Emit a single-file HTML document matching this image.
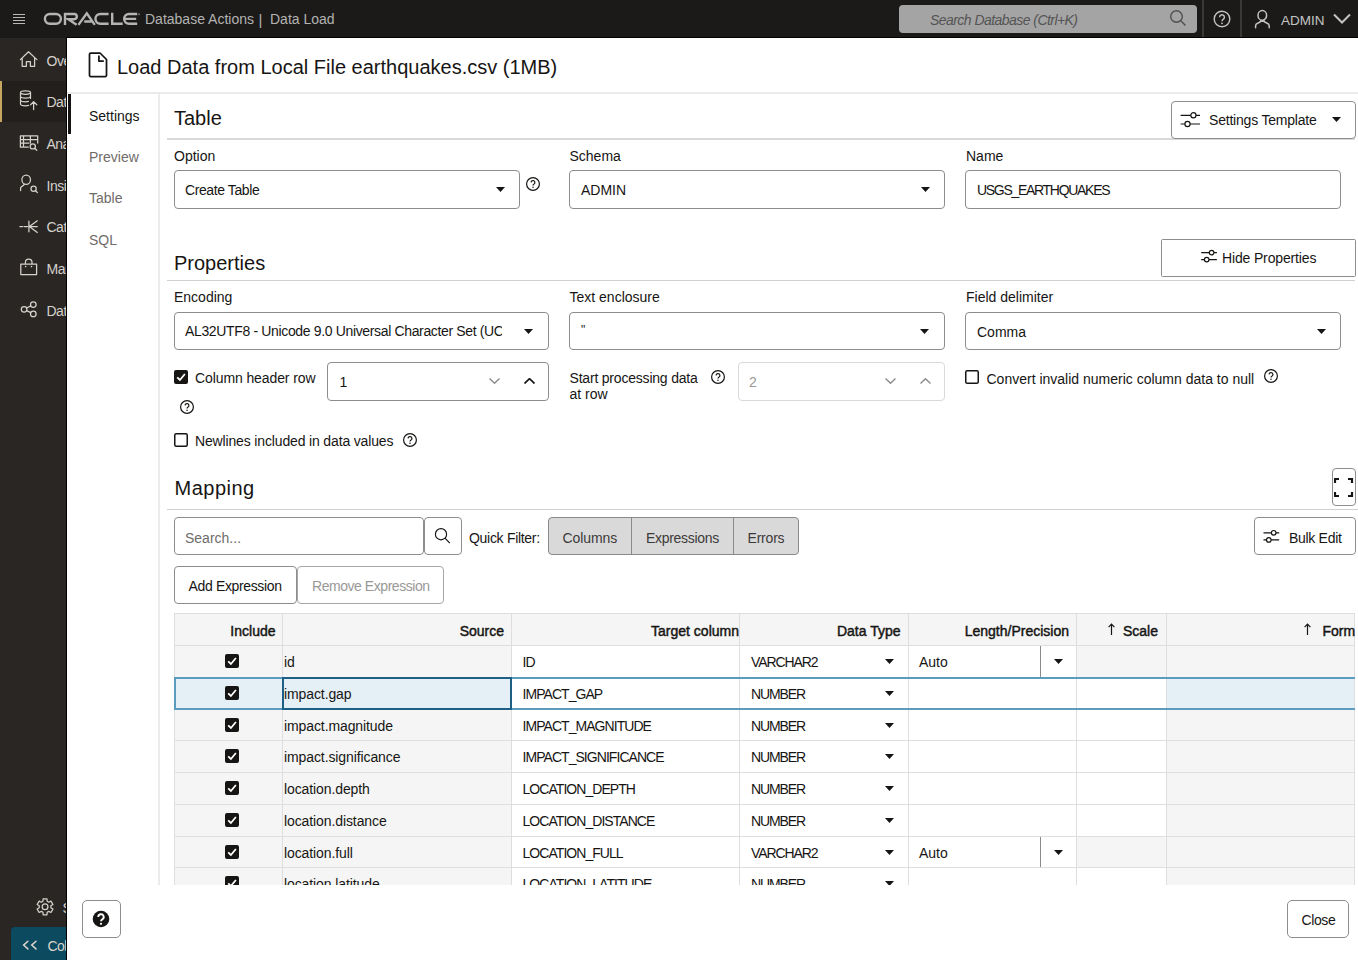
<!DOCTYPE html>
<html><head><meta charset="utf-8"><title>Load Data</title>
<style>
html,body{margin:0;padding:0;width:1358px;height:960px;overflow:hidden;background:#2a2623}
body{position:relative;font-family:"Liberation Sans",sans-serif}
.t{position:absolute;white-space:nowrap;font-family:"Liberation Sans",sans-serif}
.r{position:absolute;display:block}
</style></head><body>
<div class="r" style="left:0px;top:0px;width:1358px;height:38px;background:#1c1a18"></div>
<div class="r" style="left:13px;top:14px;width:12px;height:1.4px;background:#b9b9b9"></div>
<div class="r" style="left:13px;top:17px;width:12px;height:1.4px;background:#b9b9b9"></div>
<div class="r" style="left:13px;top:20px;width:12px;height:1.4px;background:#b9b9b9"></div>
<div class="r" style="left:13px;top:23px;width:12px;height:1.4px;background:#b9b9b9"></div>
<svg class="r" style="left:0;top:0" width="145" height="38" viewBox="0 0 145 38"><g fill="none" stroke="#b4b4b4" stroke-width="2.4"><rect x="44.9" y="14" width="16" height="9.7" rx="4.85" ry="4.85"/><path d="M65 24.9 V14 H74.2 A2.6 2.6 0 0 1 74.2 19.2 H68.2 L76.6 24.8"/><path d="M78.4 24.9 L86.8 13.4 L94.8 24.9 M84.2 21.5 H91.6"/><path d="M108.6 14 H100.3 A4.85 4.85 0 0 0 100.3 23.7 H108.6"/><path d="M112.2 12.8 V23.7 H122.7"/><path d="M137.2 14 H129 A4.85 4.85 0 0 0 129 23.7 H137.2 M125.3 18.9 H136.2"/></g><circle cx="139" cy="14.3" r="1" fill="#777"/></svg>
<div class="t" style="left:145px;top:12px;font-size:14px;line-height:14px;color:#b3b3b3;font-weight:400;">Database Actions</div>
<div class="t" style="left:258.5px;top:13px;font-size:14px;line-height:14px;color:#b3b3b3;font-weight:400;font-size:15px">|</div>
<div class="t" style="left:270px;top:12px;font-size:14px;line-height:14px;color:#b3b3b3;font-weight:400;">Data Load</div>
<div class="r" style="left:899px;top:5px;width:298px;height:28px;background:#a4a4a4;border-radius:4px"></div>
<div class="t" style="left:930px;top:13px;font-size:14px;line-height:14px;color:#545454;font-weight:400;font-style:italic;letter-spacing:-0.55px">Search Database (Ctrl+K)</div>
<svg class="r" style="left:1168px;top:8px;" width="22" height="22" viewBox="0 0 22 22"><circle cx="8.5" cy="8.5" r="5.8" fill="none" stroke="#505050" stroke-width="1.4"/><path d="M12.8 12.8 L17.5 17.5" stroke="#505050" stroke-width="1.5"/></svg>
<div class="r" style="left:1202px;top:0px;width:1.5px;height:38px;background:#3b3936"></div>
<div class="r" style="left:1240px;top:0px;width:1.5px;height:38px;background:#3b3936"></div>
<svg class="r" style="left:1212px;top:9px;" width="21" height="21" viewBox="0 0 21 21"><circle cx="10" cy="10" r="7.8" fill="none" stroke="#c4c4c4" stroke-width="1.4"/><path d="M7.6 8.2 a2.4 2.4 0 1 1 3.6 2.1 c-0.9 0.5 -1.2 0.9 -1.2 1.9" fill="none" stroke="#c4c4c4" stroke-width="1.4"/><circle cx="10" cy="14.3" r="0.9" fill="#c4c4c4"/></svg>
<svg class="r" style="left:1253px;top:9px;" width="20" height="20" viewBox="0 0 20 20"><ellipse cx="9.3" cy="6.4" rx="4.3" ry="4.9" fill="none" stroke="#c4c4c4" stroke-width="1.5"/><path d="M2.6 18.8 V16.8 C2.6 15.4 3.4 14.7 4.6 14.2 L6.6 13.3 C7.5 12.9 7.9 12.4 7.9 11.2 M16.2 18.8 V16.8 C16.2 15.4 15.4 14.7 14.2 14.2 L12.2 13.3 C11.3 12.9 10.9 12.4 10.9 11.2 M7.9 12.2 H10.9" fill="none" stroke="#c4c4c4" stroke-width="1.5" stroke-linecap="round"/></svg>
<div class="t" style="left:1281px;top:14px;font-size:13px;line-height:13px;color:#c4c4c4;font-weight:400;font-size:13.5px">ADMIN</div>
<svg class="r" style="left:1332px;top:12px;" width="20" height="14" viewBox="0 0 20 14"><path d="M2 2.5 L10 10.5 L18 2.5" fill="none" stroke="#c4c4c4" stroke-width="2"/></svg>
<div class="r" style="left:0px;top:38px;width:67px;height:922px;background:#2a2623"></div>
<div class="r" style="left:0px;top:81px;width:67px;height:41px;background:#231f1c"></div>
<div class="r" style="left:0px;top:81px;width:2px;height:41px;background:#c6a562"></div>
<div class="t" style="left:46.5px;top:54px;font-size:14px;line-height:14px;color:#d5d1cb;font-weight:400;letter-spacing:-0.5px">Overview</div>
<div class="t" style="left:46.5px;top:95px;font-size:14px;line-height:14px;color:#d5d1cb;font-weight:400;letter-spacing:-0.5px">Data Load</div>
<div class="t" style="left:46.5px;top:137px;font-size:14px;line-height:14px;color:#d5d1cb;font-weight:400;letter-spacing:-0.5px">Analysis</div>
<div class="t" style="left:46.5px;top:179px;font-size:14px;line-height:14px;color:#d5d1cb;font-weight:400;letter-spacing:-0.5px">Insights</div>
<div class="t" style="left:46.5px;top:220px;font-size:14px;line-height:14px;color:#d5d1cb;font-weight:400;letter-spacing:-0.5px">Catalog</div>
<div class="t" style="left:46.5px;top:262px;font-size:14px;line-height:14px;color:#d5d1cb;font-weight:400;letter-spacing:-0.5px">Marketplace</div>
<div class="t" style="left:46.5px;top:304px;font-size:14px;line-height:14px;color:#d5d1cb;font-weight:400;letter-spacing:-0.5px">Data Share</div>
<svg class="r" style="left:0;top:0" width="67" height="960" viewBox="0 0 67 960"><path d="M20.4 59.6 L28.5 51.8 L36.9 59.6 M22.2 58 V66.3 H26.4 V61.7 H30.4 V66.3 H34.6 V58" fill="none" stroke="#d5d1cb" stroke-width="1.25" stroke-linejoin="round" stroke-linecap="round"/><ellipse cx="25.5" cy="92.6" rx="5" ry="1.7" fill="none" stroke="#d5d1cb" stroke-width="1.25" stroke-linejoin="round" stroke-linecap="round"/><path d="M20.5 92.6 V104 c0 1.1 2.2 1.8 5 1.8 c1.2 0 2.3 -0.15 3.1 -0.4 M20.5 96.3 c0 1.1 2.2 1.8 5 1.8 s5 -0.7 5 -1.8 M20.5 100 c0 1.1 2.2 1.8 5 1.8 c1.1 0 2.1 -0.1 2.9 -0.35 M30.5 92.6 V98.5" fill="none" stroke="#d5d1cb" stroke-width="1.25" stroke-linejoin="round" stroke-linecap="round"/><path d="M33.6 109.5 V101.8 M30.6 104.8 L33.6 101.6 L36.8 104.8" fill="none" stroke="#d5d1cb" stroke-width="1.25" stroke-linejoin="round" stroke-linecap="round"/><path d="M20.4 135.9 H37.7 V143 M20.4 135.9 V147.2 H28.3 M20.4 139.5 H37.7 M20.4 143.2 H28.8 M23.5 135.9 V147.2 M30.4 135.9 V143" fill="none" stroke="#d5d1cb" stroke-width="1.25" stroke-linejoin="round" stroke-linecap="round"/><circle cx="32.8" cy="146.4" r="2.6" fill="none" stroke="#d5d1cb" stroke-width="1.25" stroke-linejoin="round" stroke-linecap="round"/><path d="M34.7 148.3 L36.8 150.3" fill="none" stroke="#d5d1cb" stroke-width="1.25" stroke-linejoin="round" stroke-linecap="round"/><ellipse cx="26.2" cy="179.8" rx="4.3" ry="4.6" fill="none" stroke="#d5d1cb" stroke-width="1.25" stroke-linejoin="round" stroke-linecap="round"/><path d="M24.3 184.3 C23.5 185.6 21.8 186.4 20.6 187.6 V190.6" fill="none" stroke="#d5d1cb" stroke-width="1.25" stroke-linejoin="round" stroke-linecap="round"/><circle cx="33.6" cy="188.8" r="2.6" fill="none" stroke="#d5d1cb" stroke-width="1.25" stroke-linejoin="round" stroke-linecap="round"/><path d="M35.5 190.7 L37.4 192.6" fill="none" stroke="#d5d1cb" stroke-width="1.25" stroke-linejoin="round" stroke-linecap="round"/><path d="M19.9 226.6 H22.8 M24.3 226.6 H27.6 M28.9 221.2 V231.8 M29.4 226.6 L37.3 220.8 M29.4 226.6 H37.3 M29.4 226.6 L37.3 232.5" fill="none" stroke="#d5d1cb" stroke-width="1.25" stroke-linejoin="round" stroke-linecap="round"/><path d="M20.8 264.1 H36.6 V274.6 H20.8 Z M25.4 264 V262.4 a3.3 3.3 0 0 1 6.6 0 V264" fill="none" stroke="#d5d1cb" stroke-width="1.25" stroke-linejoin="round" stroke-linecap="round"/><circle cx="25.7" cy="266.6" r="0.8" fill="#d5d1cb"/><circle cx="31.5" cy="266.6" r="0.8" fill="#d5d1cb"/><circle cx="24.1" cy="309.3" r="2.8" fill="none" stroke="#d5d1cb" stroke-width="1.25" stroke-linejoin="round" stroke-linecap="round"/><circle cx="33.3" cy="304.6" r="2.8" fill="none" stroke="#d5d1cb" stroke-width="1.25" stroke-linejoin="round" stroke-linecap="round"/><circle cx="33.3" cy="313.9" r="2.8" fill="none" stroke="#d5d1cb" stroke-width="1.25" stroke-linejoin="round" stroke-linecap="round"/><path d="M26.6 308 L30.8 305.9 M26.6 310.6 L30.8 312.6" fill="none" stroke="#d5d1cb" stroke-width="1.25" stroke-linejoin="round" stroke-linecap="round"/><path d="M42.97 901.28 L43.10 898.84 L47.00 898.84 L47.13 901.28 L48.79 902.24 L50.97 901.13 L52.92 904.51 L50.87 905.84 L50.87 907.76 L52.92 909.09 L50.97 912.47 L48.79 911.36 L47.13 912.32 L47.00 914.76 L43.10 914.76 L42.97 912.32 L41.31 911.36 L39.13 912.47 L37.18 909.09 L39.23 907.76 L39.23 905.84 L37.18 904.51 L39.13 901.13 L41.31 902.24 Z" fill="none" stroke="#d5d1cb" stroke-width="1.25" stroke-linejoin="round" stroke-linecap="round"/><circle cx="45.05" cy="906.8" r="2.9" fill="none" stroke="#d5d1cb" stroke-width="1.25" stroke-linejoin="round" stroke-linecap="round"/></svg>
<div class="t" style="left:62.5px;top:901px;font-size:14px;line-height:14px;color:#d5d1cb;font-weight:400;letter-spacing:-0.5px">Settings</div>
<div class="r" style="left:11px;top:927px;width:60px;height:33px;background:#0c4a60;border-top-left-radius:4px"></div>
<svg class="r" style="left:21px;top:938px;" width="18" height="14" viewBox="0 0 18 14"><path d="M6.9 3.2 L2.6 7.1 L6.9 10.9 M15 3.2 L10.7 7.1 L15 10.9" fill="none" stroke="#dcd3c8" stroke-width="1.5" stroke-linecap="round"/></svg>
<div class="t" style="left:47.5px;top:939px;font-size:14px;line-height:14px;color:#ddd5cb;font-weight:400;letter-spacing:-0.6px">Collapse</div>
<div class="r" style="left:66px;top:37px;width:1292px;height:923px;background:#fff"></div>
<div class="r" style="left:66px;top:37px;width:1.3px;height:923px;background:#000"></div>
<div class="r" style="left:66px;top:37px;width:1292px;height:1.2px;background:#000"></div>
<svg class="r" style="left:87px;top:51px;" width="22" height="28" viewBox="0 0 22 28"><path d="M2.5 3.2 a1.2 1.2 0 0 1 1.2 -1.2 H13 L19.5 8.5 V24.3 a1.2 1.2 0 0 1 -1.2 1.2 H3.7 a1.2 1.2 0 0 1 -1.2 -1.2 Z M11.9 4.6 V10 H16.8" fill="none" stroke="#161513" stroke-width="1.75" stroke-linejoin="round"/></svg>
<div class="t" style="left:117px;top:57px;font-size:20px;line-height:20px;color:#161513;font-weight:400;">Load Data from Local File earthquakes.csv (1MB)</div>
<div class="r" style="left:67px;top:92px;width:1291px;height:2px;background:#eaecec"></div>
<div class="r" style="left:158px;top:94px;width:2px;height:791px;background:#ebebeb"></div>
<div class="r" style="left:68px;top:94px;width:3px;height:40px;background:#161513"></div>
<div class="t" style="left:89px;top:109px;font-size:14px;line-height:14px;color:#161513;font-weight:400;">Settings</div>
<div class="t" style="left:89px;top:150px;font-size:14px;line-height:14px;color:#6f6c69;font-weight:400;">Preview</div>
<div class="t" style="left:89px;top:191px;font-size:14px;line-height:14px;color:#6f6c69;font-weight:400;">Table</div>
<div class="t" style="left:89px;top:233px;font-size:14px;line-height:14px;color:#6f6c69;font-weight:400;">SQL</div>
<div class="t" style="left:174px;top:108px;font-size:20px;line-height:20px;color:#161513;font-weight:400;">Table</div>
<div class="r" style="left:167px;top:138px;width:1188px;height:2px;background:#d9d9d9"></div>
<div class="r" style="left:1171px;top:101px;width:185px;height:38px;box-sizing:border-box;border:1px solid #8f8d8b;border-radius:4px;background:#fff"></div>
<svg class="r" style="left:1177px;top:111px;" width="27" height="18" viewBox="0 0 27 18"><g fill="none" stroke="#161513" stroke-width="1.2"><path d="M3.60 4.30 H13.80 M19.00 4.30 H23.00 M3.60 13.00 H7.90 M13.10 13.00 H23.00"/><circle cx="16.40" cy="4.30" r="2.6"/><circle cx="10.50" cy="13.00" r="2.6"/></g></svg>
<div class="t" style="left:1209px;top:113px;font-size:14px;line-height:14px;color:#161513;font-weight:400;letter-spacing:-0.2px">Settings Template</div>
<svg class="r" style="left:1332px;top:117px;" width="9" height="5" viewBox="0 0 9 5"><path d="M0 0 H9 L4.5 5 Z" fill="#161513"/></svg>
<div class="t" style="left:174px;top:149px;font-size:14px;line-height:14px;color:#161513;font-weight:400;">Option</div>
<div class="t" style="left:569.5px;top:149px;font-size:14px;line-height:14px;color:#161513;font-weight:400;">Schema</div>
<div class="t" style="left:966px;top:149px;font-size:14px;line-height:14px;color:#161513;font-weight:400;">Name</div>
<div class="r" style="left:174px;top:170px;width:346px;height:39px;box-sizing:border-box;border:1px solid #8f8d8b;border-radius:4px;background:#fff"></div>
<div class="t" style="left:185px;top:183px;font-size:14px;line-height:14px;color:#161513;font-weight:400;letter-spacing:-0.4px">Create Table</div>
<svg class="r" style="left:496px;top:187px;" width="9" height="5" viewBox="0 0 9 5"><path d="M0 0 H9 L4.5 5 Z" fill="#161513"/></svg>
<svg class="r" style="left:525px;top:176px;" width="16" height="16" viewBox="0 0 16 16"><circle cx="8" cy="8" r="6.4" fill="none" stroke="#161513" stroke-width="1.2"/><path d="M6.1 6.4 a1.9 1.9 0 1 1 2.9 1.7 c-0.7 0.4 -1 0.7 -1 1.5" fill="none" stroke="#161513" stroke-width="1.2"/><circle cx="8" cy="11.3" r="0.75" fill="#161513"/></svg>
<div class="r" style="left:569px;top:170px;width:376px;height:39px;box-sizing:border-box;border:1px solid #8f8d8b;border-radius:4px;background:#fff"></div>
<div class="t" style="left:581px;top:183px;font-size:14px;line-height:14px;color:#161513;font-weight:400;">ADMIN</div>
<svg class="r" style="left:921px;top:187px;" width="9" height="5" viewBox="0 0 9 5"><path d="M0 0 H9 L4.5 5 Z" fill="#161513"/></svg>
<div class="r" style="left:965px;top:170px;width:376px;height:39px;box-sizing:border-box;border:1px solid #8f8d8b;border-radius:4px;background:#fff"></div>
<div class="t" style="left:977px;top:183px;font-size:14px;line-height:14px;color:#161513;font-weight:400;letter-spacing:-1.3px">USGS_EARTHQUAKES</div>
<div class="t" style="left:174px;top:253px;font-size:20px;line-height:20px;color:#161513;font-weight:400;">Properties</div>
<div class="r" style="left:167px;top:280px;width:1188px;height:1.4px;background:#d0d0d0"></div>
<div class="r" style="left:1161px;top:239px;width:195px;height:38px;box-sizing:border-box;border:1px solid #8f8d8b;border-radius:1.5px;background:#fff"></div>
<svg class="r" style="left:1198px;top:248px;" width="22" height="16" viewBox="0 0 22 16"><g fill="none" stroke="#161513" stroke-width="1.2"><path d="M3.20 4.60 H11.30 M15.90 4.60 H18.90 M3.20 11.60 H6.40 M11.00 11.60 H18.90"/><circle cx="13.60" cy="4.60" r="2.3"/><circle cx="8.70" cy="11.60" r="2.3"/></g></svg>
<div class="t" style="left:1222px;top:251px;font-size:14px;line-height:14px;color:#161513;font-weight:400;letter-spacing:-0.15px">Hide Properties</div>
<div class="t" style="left:174px;top:290px;font-size:14px;line-height:14px;color:#161513;font-weight:400;">Encoding</div>
<div class="t" style="left:569.5px;top:290px;font-size:14px;line-height:14px;color:#161513;font-weight:400;">Text enclosure</div>
<div class="t" style="left:966px;top:290px;font-size:14px;line-height:14px;color:#161513;font-weight:400;">Field delimiter</div>
<div class="r" style="left:174px;top:312px;width:375px;height:38px;box-sizing:border-box;border:1px solid #8f8d8b;border-radius:4px;background:#fff"></div>
<div class="r" style="left:185px;top:322px;width:317px;height:20px;overflow:hidden"><div class="t" style="left:0px;top:2px;font-size:14px;line-height:14px;color:#161513;font-weight:400;letter-spacing:-0.35px">AL32UTF8 - Unicode 9.0 Universal Character Set (UCS-4)</div>
</div>
<svg class="r" style="left:524px;top:329px;" width="9" height="5" viewBox="0 0 9 5"><path d="M0 0 H9 L4.5 5 Z" fill="#161513"/></svg>
<div class="r" style="left:569px;top:312px;width:376px;height:38px;box-sizing:border-box;border:1px solid #8f8d8b;border-radius:4px;background:#fff"></div>
<div class="t" style="left:581px;top:324px;font-size:12px;line-height:12px;color:#161513;font-weight:400;">"</div>
<svg class="r" style="left:920px;top:329px;" width="9" height="5" viewBox="0 0 9 5"><path d="M0 0 H9 L4.5 5 Z" fill="#161513"/></svg>
<div class="r" style="left:965px;top:312px;width:376px;height:38px;box-sizing:border-box;border:1px solid #8f8d8b;border-radius:4px;background:#fff"></div>
<div class="t" style="left:977px;top:325px;font-size:14px;line-height:14px;color:#161513;font-weight:400;">Comma</div>
<svg class="r" style="left:1317px;top:329px;" width="9" height="5" viewBox="0 0 9 5"><path d="M0 0 H9 L4.5 5 Z" fill="#161513"/></svg>
<svg class="r" style="left:174px;top:370px;" width="14" height="14" viewBox="0 0 14 14"><rect x="0" y="0" width="14" height="14" rx="2" fill="#161513"/><path d="M3.2 7.3 L5.9 10 L10.9 4" fill="none" stroke="#fff" stroke-width="1.8"/></svg>
<div class="t" style="left:195px;top:371px;font-size:14px;line-height:14px;color:#161513;font-weight:400;letter-spacing:-0.1px">Column header row</div>
<svg class="r" style="left:179px;top:399px;" width="16" height="16" viewBox="0 0 16 16"><circle cx="8" cy="8" r="6.4" fill="none" stroke="#161513" stroke-width="1.2"/><path d="M6.1 6.4 a1.9 1.9 0 1 1 2.9 1.7 c-0.7 0.4 -1 0.7 -1 1.5" fill="none" stroke="#161513" stroke-width="1.2"/><circle cx="8" cy="11.3" r="0.75" fill="#161513"/></svg>
<div class="r" style="left:327px;top:362px;width:222px;height:39px;box-sizing:border-box;border:1px solid #8f8d8b;border-radius:4px;background:#fff"></div>
<div class="t" style="left:339.5px;top:375px;font-size:14px;line-height:14px;color:#161513;font-weight:400;">1</div>
<svg class="r" style="left:489px;top:377.5px;" width="11" height="6" viewBox="0 0 11 6"><path d="M0.5 0.5 L5.5 5.3 L10.5 0.5" fill="none" stroke="#8a8886" stroke-width="1.3"/></svg>
<svg class="r" style="left:524px;top:377.5px;" width="11" height="6" viewBox="0 0 11 6"><path d="M0.5 5.5 L5.5 0.7 L10.5 5.5" fill="none" stroke="#161513" stroke-width="1.7"/></svg>
<div class="t" style="left:569.5px;top:371px;font-size:14px;line-height:14px;color:#161513;font-weight:400;letter-spacing:-0.2px">Start processing data</div>
<div class="t" style="left:569.5px;top:387px;font-size:14px;line-height:14px;color:#161513;font-weight:400;">at row</div>
<svg class="r" style="left:710px;top:369px;" width="16" height="16" viewBox="0 0 16 16"><circle cx="8" cy="8" r="6.4" fill="none" stroke="#161513" stroke-width="1.2"/><path d="M6.1 6.4 a1.9 1.9 0 1 1 2.9 1.7 c-0.7 0.4 -1 0.7 -1 1.5" fill="none" stroke="#161513" stroke-width="1.2"/><circle cx="8" cy="11.3" r="0.75" fill="#161513"/></svg>
<div class="r" style="left:738px;top:362px;width:207px;height:39px;box-sizing:border-box;border:1px solid #d9d9d9;border-radius:4px;background:#fff"></div>
<div class="t" style="left:749px;top:375px;font-size:14px;line-height:14px;color:#9a9896;font-weight:400;">2</div>
<svg class="r" style="left:885px;top:377.5px;" width="11" height="6" viewBox="0 0 11 6"><path d="M0.5 0.5 L5.5 5.3 L10.5 0.5" fill="none" stroke="#8a8886" stroke-width="1.3"/></svg>
<svg class="r" style="left:920px;top:377.5px;" width="11" height="6" viewBox="0 0 11 6"><path d="M0.5 5.5 L5.5 0.7 L10.5 5.5" fill="none" stroke="#8a8886" stroke-width="1.3"/></svg>
<svg class="r" style="left:965px;top:370px;" width="14" height="14" viewBox="0 0 14 14"><rect x="0.75" y="0.75" width="12.5" height="12.5" rx="1.5" fill="#fff" stroke="#161513" stroke-width="1.5"/></svg>
<div class="t" style="left:986.5px;top:372px;font-size:14px;line-height:14px;color:#161513;font-weight:400;">Convert invalid numeric column data to null</div>
<svg class="r" style="left:1263px;top:368px;" width="16" height="16" viewBox="0 0 16 16"><circle cx="8" cy="8" r="6.4" fill="none" stroke="#161513" stroke-width="1.2"/><path d="M6.1 6.4 a1.9 1.9 0 1 1 2.9 1.7 c-0.7 0.4 -1 0.7 -1 1.5" fill="none" stroke="#161513" stroke-width="1.2"/><circle cx="8" cy="11.3" r="0.75" fill="#161513"/></svg>
<svg class="r" style="left:174px;top:433px;" width="14" height="14" viewBox="0 0 14 14"><rect x="0.75" y="0.75" width="12.5" height="12.5" rx="1.5" fill="#fff" stroke="#161513" stroke-width="1.5"/></svg>
<div class="t" style="left:195px;top:434px;font-size:14px;line-height:14px;color:#161513;font-weight:400;letter-spacing:-0.15px">Newlines included in data values</div>
<svg class="r" style="left:402px;top:432px;" width="16" height="16" viewBox="0 0 16 16"><circle cx="8" cy="8" r="6.4" fill="none" stroke="#161513" stroke-width="1.2"/><path d="M6.1 6.4 a1.9 1.9 0 1 1 2.9 1.7 c-0.7 0.4 -1 0.7 -1 1.5" fill="none" stroke="#161513" stroke-width="1.2"/><circle cx="8" cy="11.3" r="0.75" fill="#161513"/></svg>
<div class="t" style="left:174.5px;top:478px;font-size:20px;line-height:20px;color:#161513;font-weight:400;letter-spacing:0.5px">Mapping</div>
<div class="r" style="left:167px;top:509px;width:1191px;height:1.4px;background:#d0d0d0"></div>
<div class="r" style="left:1332px;top:468px;width:24px;height:38px;box-sizing:border-box;border:1px solid #8f8d8b;border-radius:4px;background:#fff"></div>
<svg class="r" style="left:1334px;top:478px;" width="20" height="20" viewBox="0 0 20 20"><path d="M1 5 V1 H5 M14 1 H18 V5 M18 14 V18 H14 M5 18 H1 V14" fill="none" stroke="#161513" stroke-width="2.2"/></svg>
<div class="r" style="left:174px;top:517px;width:250px;height:38px;box-sizing:border-box;border:1px solid #8f8d8b;border-radius:4px;background:#fff"></div>
<div class="t" style="left:185px;top:531px;font-size:14px;line-height:14px;color:#6f6c69;font-weight:400;">Search...</div>
<div class="r" style="left:424px;top:517px;width:38px;height:38px;box-sizing:border-box;border:1px solid #8f8d8b;border-radius:4px;background:#fff"></div>
<svg class="r" style="left:433px;top:526px;" width="20" height="20" viewBox="0 0 20 20"><circle cx="8" cy="8.2" r="5.6" fill="none" stroke="#161513" stroke-width="1.15"/><path d="M12 12.2 L16.8 17.2" stroke="#161513" stroke-width="1.2"/></svg>
<div class="t" style="left:469px;top:531px;font-size:14px;line-height:14px;color:#161513;font-weight:400;letter-spacing:-0.3px">Quick Filter:</div>
<div class="r" style="left:548px;top:517px;width:251px;height:38px;box-sizing:border-box;border:1px solid #8c8a88;border-radius:4px;background:#d9d9d9"></div>
<div class="r" style="left:631px;top:518px;width:1.2px;height:36px;background:#8c8a88"></div>
<div class="r" style="left:732.5px;top:518px;width:1.2px;height:36px;background:#8c8a88"></div>
<div class="t" style="left:562.5px;top:531px;font-size:14px;line-height:14px;color:#3d3b39;font-weight:400;letter-spacing:-0.1px">Columns</div>
<div class="t" style="left:646px;top:531px;font-size:14px;line-height:14px;color:#3d3b39;font-weight:400;letter-spacing:-0.3px">Expressions</div>
<div class="t" style="left:747.5px;top:531px;font-size:14px;line-height:14px;color:#3d3b39;font-weight:400;letter-spacing:-0.2px">Errors</div>
<div class="r" style="left:1254px;top:517px;width:102px;height:38px;box-sizing:border-box;border:1px solid #8f8d8b;border-radius:4px;background:#fff"></div>
<svg class="r" style="left:1260px;top:528px;" width="23" height="16" viewBox="0 0 23 16"><g fill="none" stroke="#161513" stroke-width="1.2"><path d="M3.50 4.80 H11.40 M16.00 4.80 H19.20 M3.50 11.90 H6.50 M11.10 11.90 H19.20"/><circle cx="13.70" cy="4.80" r="2.3"/><circle cx="8.80" cy="11.90" r="2.3"/></g></svg>
<div class="t" style="left:1289px;top:531px;font-size:14px;line-height:14px;color:#161513;font-weight:400;letter-spacing:-0.3px">Bulk Edit</div>
<div class="r" style="left:174px;top:566px;width:123px;height:38px;box-sizing:border-box;border:1px solid #8f8d8b;border-radius:4px;background:#fff"></div>
<div class="t" style="left:188.5px;top:579px;font-size:14px;line-height:14px;color:#161513;font-weight:400;letter-spacing:-0.35px">Add Expression</div>
<div class="r" style="left:297px;top:566px;width:147px;height:38px;box-sizing:border-box;border:1px solid #a8a6a4;border-radius:4px;background:#fff"></div>
<div class="t" style="left:312px;top:579px;font-size:14px;line-height:14px;color:#9a9896;font-weight:400;letter-spacing:-0.45px">Remove Expression</div>
<div class="r" style="left:174px;top:613px;width:1181px;height:272px;overflow:hidden">
<div class="r" style="left:0px;top:0px;width:1181px;height:32px;background:#f5f5f5"></div>
<div class="r" style="left:0px;top:32px;width:337px;height:32px;background:#f5f5f5"></div>
<div class="r" style="left:337px;top:32px;width:565px;height:32px;background:#fff"></div>
<div class="r" style="left:902px;top:32px;width:90px;height:32px;background:#f5f5f5"></div>
<div class="r" style="left:992px;top:32px;width:189px;height:32px;background:#f5f5f5"></div>
<div class="r" style="left:0px;top:64px;width:337px;height:32px;background:#e4eff6"></div>
<div class="r" style="left:337px;top:64px;width:565px;height:32px;background:#fff"></div>
<div class="r" style="left:902px;top:64px;width:90px;height:32px;background:#fff"></div>
<div class="r" style="left:992px;top:64px;width:189px;height:32px;background:#e4eff6"></div>
<div class="r" style="left:0px;top:96px;width:337px;height:31px;background:#f5f5f5"></div>
<div class="r" style="left:337px;top:96px;width:565px;height:31px;background:#fff"></div>
<div class="r" style="left:902px;top:96px;width:90px;height:31px;background:#fff"></div>
<div class="r" style="left:992px;top:96px;width:189px;height:31px;background:#f5f5f5"></div>
<div class="r" style="left:0px;top:127px;width:337px;height:32px;background:#f5f5f5"></div>
<div class="r" style="left:337px;top:127px;width:565px;height:32px;background:#fff"></div>
<div class="r" style="left:902px;top:127px;width:90px;height:32px;background:#fff"></div>
<div class="r" style="left:992px;top:127px;width:189px;height:32px;background:#f5f5f5"></div>
<div class="r" style="left:0px;top:159px;width:337px;height:32px;background:#f5f5f5"></div>
<div class="r" style="left:337px;top:159px;width:565px;height:32px;background:#fff"></div>
<div class="r" style="left:902px;top:159px;width:90px;height:32px;background:#fff"></div>
<div class="r" style="left:992px;top:159px;width:189px;height:32px;background:#f5f5f5"></div>
<div class="r" style="left:0px;top:191px;width:337px;height:32px;background:#f5f5f5"></div>
<div class="r" style="left:337px;top:191px;width:565px;height:32px;background:#fff"></div>
<div class="r" style="left:902px;top:191px;width:90px;height:32px;background:#fff"></div>
<div class="r" style="left:992px;top:191px;width:189px;height:32px;background:#f5f5f5"></div>
<div class="r" style="left:0px;top:223px;width:337px;height:31px;background:#f5f5f5"></div>
<div class="r" style="left:337px;top:223px;width:565px;height:31px;background:#fff"></div>
<div class="r" style="left:902px;top:223px;width:90px;height:31px;background:#f5f5f5"></div>
<div class="r" style="left:992px;top:223px;width:189px;height:31px;background:#f5f5f5"></div>
<div class="r" style="left:0px;top:254px;width:337px;height:32px;background:#f5f5f5"></div>
<div class="r" style="left:337px;top:254px;width:565px;height:32px;background:#fff"></div>
<div class="r" style="left:902px;top:254px;width:90px;height:32px;background:#fff"></div>
<div class="r" style="left:992px;top:254px;width:189px;height:32px;background:#f5f5f5"></div>
<div class="r" style="left:0px;top:0px;width:1181px;height:1.2px;background:#dedede"></div>
<div class="r" style="left:0px;top:32px;width:1181px;height:1.2px;background:#dedede"></div>
<div class="r" style="left:0px;top:64px;width:1181px;height:1.2px;background:#dedede"></div>
<div class="r" style="left:0px;top:96px;width:1181px;height:1.2px;background:#dedede"></div>
<div class="r" style="left:0px;top:127px;width:1181px;height:1.2px;background:#dedede"></div>
<div class="r" style="left:0px;top:159px;width:1181px;height:1.2px;background:#dedede"></div>
<div class="r" style="left:0px;top:191px;width:1181px;height:1.2px;background:#dedede"></div>
<div class="r" style="left:0px;top:223px;width:1181px;height:1.2px;background:#dedede"></div>
<div class="r" style="left:0px;top:254px;width:1181px;height:1.2px;background:#dedede"></div>
<div class="r" style="left:0px;top:286px;width:1181px;height:1.2px;background:#dedede"></div>
<div class="r" style="left:0px;top:0px;width:1.2px;height:280px;background:#dedede"></div>
<div class="r" style="left:108px;top:0px;width:1.2px;height:280px;background:#dedede"></div>
<div class="r" style="left:337px;top:0px;width:1.2px;height:280px;background:#dedede"></div>
<div class="r" style="left:565px;top:0px;width:1.2px;height:280px;background:#dedede"></div>
<div class="r" style="left:734px;top:0px;width:1.2px;height:280px;background:#dedede"></div>
<div class="r" style="left:902px;top:0px;width:1.2px;height:280px;background:#dedede"></div>
<div class="r" style="left:992px;top:0px;width:1.2px;height:280px;background:#dedede"></div>
<div class="r" style="left:1180px;top:0px;width:1px;height:280px;background:#dedede"></div>
<div class="r" style="left:0px;top:64px;width:1181px;height:2px;background:#5b9bbd"></div>
<div class="r" style="left:0px;top:95px;width:1181px;height:2px;background:#5b9bbd"></div>
<div class="r" style="left:0px;top:64px;width:2px;height:33px;background:#5b9bbd"></div>
<div class="r" style="left:108px;top:64px;width:230px;height:33px;box-sizing:border-box;border:2px solid #1e5f86"></div>
<div class="t" style="right:1079.5px;top:11px;font-size:14px;line-height:14px;color:#161513;font-weight:400;-webkit-text-stroke:0.45px #161513">Include</div>
<div class="t" style="right:851px;top:11px;font-size:14px;line-height:14px;color:#161513;font-weight:400;-webkit-text-stroke:0.45px #161513">Source</div>
<div class="t" style="right:616px;top:11px;font-size:14px;line-height:14px;color:#161513;font-weight:400;-webkit-text-stroke:0.45px #161513">Target column</div>
<div class="t" style="right:454.5px;top:11px;font-size:14px;line-height:14px;color:#161513;font-weight:400;-webkit-text-stroke:0.45px #161513">Data Type</div>
<div class="t" style="right:286px;top:11px;font-size:14px;line-height:14px;color:#161513;font-weight:400;-webkit-text-stroke:0.45px #161513">Length/Precision</div>
<div class="t" style="right:197px;top:11px;font-size:14px;line-height:14px;color:#161513;font-weight:400;-webkit-text-stroke:0.45px #161513">Scale</div>
<div class="t" style="left:1148.5px;top:11px;font-size:14px;line-height:14px;color:#161513;font-weight:400;-webkit-text-stroke:0.45px #161513">Format</div>
<svg class="r" style="left:934px;top:10px;" width="7" height="13" viewBox="0 0 7 13"><path d="M3.5 12 V1.2 M0.6 4.2 L3.5 1.2 L6.4 4.2" fill="none" stroke="#161513" stroke-width="1.2"/></svg>
<svg class="r" style="left:1130px;top:10px;" width="7" height="13" viewBox="0 0 7 13"><path d="M3.5 12 V1.2 M0.6 4.2 L3.5 1.2 L6.4 4.2" fill="none" stroke="#161513" stroke-width="1.2"/></svg>
<svg class="r" style="left:51px;top:41px;" width="14" height="14" viewBox="0 0 14 14"><rect x="0" y="0" width="14" height="14" rx="2" fill="#161513"/><path d="M3.2 7.3 L5.9 10 L10.9 4" fill="none" stroke="#fff" stroke-width="1.8"/></svg>
<div class="t" style="left:110px;top:41.5px;font-size:14px;line-height:14px;color:#161513;font-weight:400;letter-spacing:-0.1px">id</div>
<div class="t" style="left:348.5px;top:41.5px;font-size:14px;line-height:14px;color:#161513;font-weight:400;letter-spacing:-0.95px">ID</div>
<div class="t" style="left:577px;top:41.5px;font-size:14px;line-height:14px;color:#161513;font-weight:400;letter-spacing:-1.1px">VARCHAR2</div>
<svg class="r" style="left:711px;top:46px;" width="9" height="5" viewBox="0 0 9 5"><path d="M0 0 H9 L4.5 5 Z" fill="#161513"/></svg>
<div class="t" style="left:745px;top:41.5px;font-size:14px;line-height:14px;color:#161513;font-weight:400;">Auto</div>
<div class="r" style="left:866px;top:33px;width:1.4px;height:31px;background:#8a8a8a"></div>
<svg class="r" style="left:880px;top:46px;" width="9" height="5" viewBox="0 0 9 5"><path d="M0 0 H9 L4.5 5 Z" fill="#161513"/></svg>
<svg class="r" style="left:51px;top:73px;" width="14" height="14" viewBox="0 0 14 14"><rect x="0" y="0" width="14" height="14" rx="2" fill="#161513"/><path d="M3.2 7.3 L5.9 10 L10.9 4" fill="none" stroke="#fff" stroke-width="1.8"/></svg>
<div class="t" style="left:110px;top:73.5px;font-size:14px;line-height:14px;color:#161513;font-weight:400;letter-spacing:-0.1px">impact.gap</div>
<div class="t" style="left:348.5px;top:73.5px;font-size:14px;line-height:14px;color:#161513;font-weight:400;letter-spacing:-0.95px">IMPACT_GAP</div>
<div class="t" style="left:577px;top:73.5px;font-size:14px;line-height:14px;color:#161513;font-weight:400;letter-spacing:-1.1px">NUMBER</div>
<svg class="r" style="left:711px;top:78px;" width="9" height="5" viewBox="0 0 9 5"><path d="M0 0 H9 L4.5 5 Z" fill="#161513"/></svg>
<svg class="r" style="left:51px;top:105px;" width="14" height="14" viewBox="0 0 14 14"><rect x="0" y="0" width="14" height="14" rx="2" fill="#161513"/><path d="M3.2 7.3 L5.9 10 L10.9 4" fill="none" stroke="#fff" stroke-width="1.8"/></svg>
<div class="t" style="left:110px;top:105.5px;font-size:14px;line-height:14px;color:#161513;font-weight:400;letter-spacing:-0.1px">impact.magnitude</div>
<div class="t" style="left:348.5px;top:105.5px;font-size:14px;line-height:14px;color:#161513;font-weight:400;letter-spacing:-0.95px">IMPACT_MAGNITUDE</div>
<div class="t" style="left:577px;top:105.5px;font-size:14px;line-height:14px;color:#161513;font-weight:400;letter-spacing:-1.1px">NUMBER</div>
<svg class="r" style="left:711px;top:110px;" width="9" height="5" viewBox="0 0 9 5"><path d="M0 0 H9 L4.5 5 Z" fill="#161513"/></svg>
<svg class="r" style="left:51px;top:136px;" width="14" height="14" viewBox="0 0 14 14"><rect x="0" y="0" width="14" height="14" rx="2" fill="#161513"/><path d="M3.2 7.3 L5.9 10 L10.9 4" fill="none" stroke="#fff" stroke-width="1.8"/></svg>
<div class="t" style="left:110px;top:136.5px;font-size:14px;line-height:14px;color:#161513;font-weight:400;letter-spacing:-0.1px">impact.significance</div>
<div class="t" style="left:348.5px;top:136.5px;font-size:14px;line-height:14px;color:#161513;font-weight:400;letter-spacing:-0.95px">IMPACT_SIGNIFICANCE</div>
<div class="t" style="left:577px;top:136.5px;font-size:14px;line-height:14px;color:#161513;font-weight:400;letter-spacing:-1.1px">NUMBER</div>
<svg class="r" style="left:711px;top:141px;" width="9" height="5" viewBox="0 0 9 5"><path d="M0 0 H9 L4.5 5 Z" fill="#161513"/></svg>
<svg class="r" style="left:51px;top:168px;" width="14" height="14" viewBox="0 0 14 14"><rect x="0" y="0" width="14" height="14" rx="2" fill="#161513"/><path d="M3.2 7.3 L5.9 10 L10.9 4" fill="none" stroke="#fff" stroke-width="1.8"/></svg>
<div class="t" style="left:110px;top:168.5px;font-size:14px;line-height:14px;color:#161513;font-weight:400;letter-spacing:-0.1px">location.depth</div>
<div class="t" style="left:348.5px;top:168.5px;font-size:14px;line-height:14px;color:#161513;font-weight:400;letter-spacing:-0.95px">LOCATION_DEPTH</div>
<div class="t" style="left:577px;top:168.5px;font-size:14px;line-height:14px;color:#161513;font-weight:400;letter-spacing:-1.1px">NUMBER</div>
<svg class="r" style="left:711px;top:173px;" width="9" height="5" viewBox="0 0 9 5"><path d="M0 0 H9 L4.5 5 Z" fill="#161513"/></svg>
<svg class="r" style="left:51px;top:200px;" width="14" height="14" viewBox="0 0 14 14"><rect x="0" y="0" width="14" height="14" rx="2" fill="#161513"/><path d="M3.2 7.3 L5.9 10 L10.9 4" fill="none" stroke="#fff" stroke-width="1.8"/></svg>
<div class="t" style="left:110px;top:200.5px;font-size:14px;line-height:14px;color:#161513;font-weight:400;letter-spacing:-0.1px">location.distance</div>
<div class="t" style="left:348.5px;top:200.5px;font-size:14px;line-height:14px;color:#161513;font-weight:400;letter-spacing:-0.95px">LOCATION_DISTANCE</div>
<div class="t" style="left:577px;top:200.5px;font-size:14px;line-height:14px;color:#161513;font-weight:400;letter-spacing:-1.1px">NUMBER</div>
<svg class="r" style="left:711px;top:205px;" width="9" height="5" viewBox="0 0 9 5"><path d="M0 0 H9 L4.5 5 Z" fill="#161513"/></svg>
<svg class="r" style="left:51px;top:232px;" width="14" height="14" viewBox="0 0 14 14"><rect x="0" y="0" width="14" height="14" rx="2" fill="#161513"/><path d="M3.2 7.3 L5.9 10 L10.9 4" fill="none" stroke="#fff" stroke-width="1.8"/></svg>
<div class="t" style="left:110px;top:232.5px;font-size:14px;line-height:14px;color:#161513;font-weight:400;letter-spacing:-0.1px">location.full</div>
<div class="t" style="left:348.5px;top:232.5px;font-size:14px;line-height:14px;color:#161513;font-weight:400;letter-spacing:-0.95px">LOCATION_FULL</div>
<div class="t" style="left:577px;top:232.5px;font-size:14px;line-height:14px;color:#161513;font-weight:400;letter-spacing:-1.1px">VARCHAR2</div>
<svg class="r" style="left:711px;top:237px;" width="9" height="5" viewBox="0 0 9 5"><path d="M0 0 H9 L4.5 5 Z" fill="#161513"/></svg>
<div class="t" style="left:745px;top:232.5px;font-size:14px;line-height:14px;color:#161513;font-weight:400;">Auto</div>
<div class="r" style="left:866px;top:224px;width:1.4px;height:30px;background:#8a8a8a"></div>
<svg class="r" style="left:880px;top:237px;" width="9" height="5" viewBox="0 0 9 5"><path d="M0 0 H9 L4.5 5 Z" fill="#161513"/></svg>
<svg class="r" style="left:51px;top:263px;" width="14" height="14" viewBox="0 0 14 14"><rect x="0" y="0" width="14" height="14" rx="2" fill="#161513"/><path d="M3.2 7.3 L5.9 10 L10.9 4" fill="none" stroke="#fff" stroke-width="1.8"/></svg>
<div class="t" style="left:110px;top:263.5px;font-size:14px;line-height:14px;color:#161513;font-weight:400;letter-spacing:-0.1px">location.latitude</div>
<div class="t" style="left:348.5px;top:263.5px;font-size:14px;line-height:14px;color:#161513;font-weight:400;letter-spacing:-0.95px">LOCATION_LATITUDE</div>
<div class="t" style="left:577px;top:263.5px;font-size:14px;line-height:14px;color:#161513;font-weight:400;letter-spacing:-1.1px">NUMBER</div>
<svg class="r" style="left:711px;top:268px;" width="9" height="5" viewBox="0 0 9 5"><path d="M0 0 H9 L4.5 5 Z" fill="#161513"/></svg>
</div>
<div class="r" style="left:82px;top:900px;width:39px;height:38px;box-sizing:border-box;border:1px solid #8f8d8b;border-radius:5px;background:#fff"></div>
<svg class="r" style="left:92px;top:910px;" width="18" height="18" viewBox="0 0 18 18"><circle cx="9" cy="9" r="8.3" fill="#161513"/><path d="M6.3 7 a2.7 2.7 0 1 1 4 2.3 c-0.9 0.5 -1.3 0.9 -1.3 2" fill="none" stroke="#fff" stroke-width="1.9"/><circle cx="9" cy="13.8" r="1.1" fill="#fff"/></svg>
<div class="r" style="left:1287px;top:900px;width:62px;height:38px;box-sizing:border-box;border:1px solid #8f8d8b;border-radius:5px;background:#fff"></div>
<div class="t" style="left:1301.5px;top:913px;font-size:14px;line-height:14px;color:#161513;font-weight:400;letter-spacing:-0.4px">Close</div>
</body></html>
